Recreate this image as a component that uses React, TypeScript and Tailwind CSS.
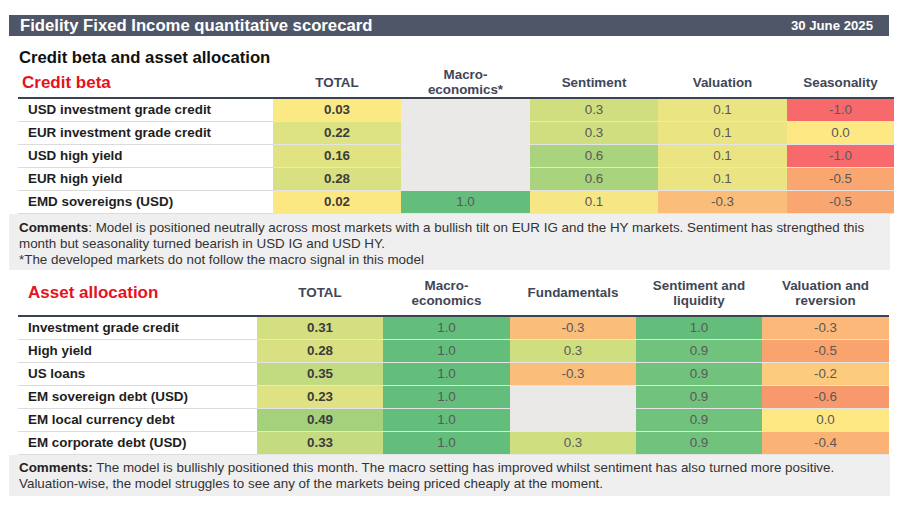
type Cell = { v: string; bg: string } | null;
type Row = { name: string; cells: Cell[] };

const creditCols = "grid-cols-[255px_128px_129px_128px_129px_107px]";
const assetCols = "grid-cols-[239px_126px_127px_126px_126px_127px]";

const creditRows: Row[] = [
  {
    name: "USD investment grade credit",
    cells: [
      { v: "0.03", bg: "bg-[#fbe983]" },
      null,
      { v: "0.3", bg: "bg-[#d0de80]" },
      { v: "0.1", bg: "bg-[#eae582]" },
      { v: "-1.0", bg: "bg-[#f8696b]" },
    ],
  },
  {
    name: "EUR investment grade credit",
    cells: [
      { v: "0.22", bg: "bg-[#dde282]" },
      null,
      { v: "0.3", bg: "bg-[#d0de80]" },
      { v: "0.1", bg: "bg-[#eae582]" },
      { v: "0.0", bg: "bg-[#fee883]" },
    ],
  },
  {
    name: "USD high yield",
    cells: [
      { v: "0.16", bg: "bg-[#e1e382]" },
      null,
      { v: "0.6", bg: "bg-[#a9d37d]" },
      { v: "0.1", bg: "bg-[#eae582]" },
      { v: "-1.0", bg: "bg-[#f8696b]" },
    ],
  },
  {
    name: "EUR high yield",
    cells: [
      { v: "0.28", bg: "bg-[#d9e081]" },
      null,
      { v: "0.6", bg: "bg-[#a9d37d]" },
      { v: "0.1", bg: "bg-[#eae582]" },
      { v: "-0.5", bg: "bg-[#f9a671]" },
    ],
  },
  {
    name: "EMD sovereigns (USD)",
    cells: [
      { v: "0.02", bg: "bg-[#fce883]" },
      { v: "1.0", bg: "bg-[#63be7b]" },
      { v: "0.1", bg: "bg-[#f7e784]" },
      { v: "-0.3", bg: "bg-[#fbbe7a]" },
      { v: "-0.5", bg: "bg-[#f9a671]" },
    ],
  },
];

const assetRows: Row[] = [
  {
    name: "Investment grade credit",
    cells: [
      { v: "0.31", bg: "bg-[#d3df81]" },
      { v: "1.0", bg: "bg-[#63be7b]" },
      { v: "-0.3", bg: "bg-[#fbbd7a]" },
      { v: "1.0", bg: "bg-[#63be7b]" },
      { v: "-0.3", bg: "bg-[#fbb879]" },
    ],
  },
  {
    name: "High yield",
    cells: [
      { v: "0.28", bg: "bg-[#d8e082]" },
      { v: "1.0", bg: "bg-[#63be7b]" },
      { v: "0.3", bg: "bg-[#cfdf80]" },
      { v: "0.9", bg: "bg-[#71c27c]" },
      { v: "-0.5", bg: "bg-[#f9a46f]" },
    ],
  },
  {
    name: "US loans",
    cells: [
      { v: "0.35", bg: "bg-[#c2da80]" },
      { v: "1.0", bg: "bg-[#63be7b]" },
      { v: "-0.3", bg: "bg-[#fbbd7a]" },
      { v: "0.9", bg: "bg-[#71c27c]" },
      { v: "-0.2", bg: "bg-[#fdcb7d]" },
    ],
  },
  {
    name: "EM sovereign debt (USD)",
    cells: [
      { v: "0.23", bg: "bg-[#dfe283]" },
      { v: "1.0", bg: "bg-[#63be7b]" },
      null,
      { v: "0.9", bg: "bg-[#71c27c]" },
      { v: "-0.6", bg: "bg-[#f8986d]" },
    ],
  },
  {
    name: "EM local currency debt",
    cells: [
      { v: "0.49", bg: "bg-[#a5d17c]" },
      { v: "1.0", bg: "bg-[#63be7b]" },
      null,
      { v: "0.9", bg: "bg-[#71c27c]" },
      { v: "0.0", bg: "bg-[#fee883]" },
    ],
  },
  {
    name: "EM corporate debt (USD)",
    cells: [
      { v: "0.33", bg: "bg-[#c5db80]" },
      { v: "1.0", bg: "bg-[#63be7b]" },
      { v: "0.3", bg: "bg-[#cfdf80]" },
      { v: "0.9", bg: "bg-[#71c27c]" },
      { v: "-0.4", bg: "bg-[#fab275]" },
    ],
  },
];

function TableRow({ row, cols }: { row: Row; cols: string }) {
  return (
    <div className={`grid ${cols}`}>
      <div className="h-[23px] border-b border-[#dcdcdc] pl-[10px] flex items-center font-bold text-[13.4px] text-[#1e1e1e]">
        {row.name}
      </div>
      {row.cells.map((c, i) =>
        c ? (
          <div
            key={i}
            className={`h-[23px] border-b border-[#e4e4e4] flex items-center justify-center text-[13.4px] ${c.bg} ${
              i === 0 ? "font-bold text-[#3c3c3c]" : "text-[#595959]"
            }`}
          >
            {c.v}
          </div>
        ) : (
          <div key={i} className="h-[23px] border-b border-[#ebe9e8] bg-[#ebe9e8]" />
        )
      )}
    </div>
  );
}

function Head({ children }: { children: React.ReactNode }) {
  return <div className="text-center font-bold text-[13.4px] leading-[15px] text-[#3f4756]">{children}</div>;
}

export default function App() {
  return (
    <div className="w-[900px] h-[510px] bg-white pt-[15px] font-['Liberation_Sans',Arial,sans-serif] overflow-hidden">
      {/* title bar */}
      <div className="ml-[9px] w-[880px] h-[21px] bg-[#4e5667] flex items-center justify-between pl-[11px] pr-[16px]">
        <span className="text-white font-bold text-[16.7px]">Fidelity Fixed Income quantitative scorecard</span>
        <span className="text-white font-bold text-[13.2px]">30 June 2025</span>
      </div>

      <div className="ml-[19px] mt-[13px] h-[18px] leading-[18px] text-[16.7px] font-bold text-[#111]">
        Credit beta and asset allocation
      </div>

      {/* credit beta */}
      <div className="ml-[18px] w-[876px]">
        <div className={`grid ${creditCols} h-[32px] items-center border-b-2 border-[#3b4353]`}>
          <div className="pl-[4px] pt-[1px] text-[17px] font-bold text-[#e5131d]">Credit beta</div>
          <Head>TOTAL</Head>
          <Head>
            Macro-
            <br />
            economics*
          </Head>
          <Head>Sentiment</Head>
          <Head>Valuation</Head>
          <Head>Seasonality</Head>
        </div>
        {creditRows.map((r) => (
          <TableRow key={r.name} row={r} cols={creditCols} />
        ))}
      </div>

      <div className="ml-[9px] w-[881px] h-[56px] bg-[#efefef] pl-[10px] pt-[6px] text-[13.4px] leading-[16px] text-[#333]">
        <span className="font-bold text-[#222]">Comments</span>: Model is positioned neutrally across most markets with a bullish tilt on EUR IG and the HY markets. Sentiment has strengthed this
        <br />
        month but seasonality turned bearish in USD IG and USD HY.
        <br />
        *The developed markets do not follow the macro signal in this model
      </div>

      {/* asset allocation */}
      <div className="ml-[18px] w-[871px]">
        <div className={`grid ${assetCols} h-[47px] items-center border-b-2 border-[#3b4353]`}>
          <div className="pl-[10px] pt-[1px] text-[17px] font-bold text-[#e5131d]">Asset allocation</div>
          <Head>TOTAL</Head>
          <Head>
            Macro-
            <br />
            economics
          </Head>
          <Head>Fundamentals</Head>
          <Head>
            Sentiment and
            <br />
            liquidity
          </Head>
          <Head>
            Valuation and
            <br />
            reversion
          </Head>
        </div>
        {assetRows.map((r) => (
          <TableRow key={r.name} row={r} cols={assetCols} />
        ))}
      </div>

      <div className="ml-[9px] w-[881px] h-[41px] bg-[#efefef] pl-[10px] pt-[5px] text-[13.4px] leading-[16px] text-[#333]">
        <span className="font-bold text-[#222]">Comments:</span> The model is bullishly positioned this month. The macro setting has improved whilst sentiment has also turned more positive.
        <br />
        Valuation-wise, the model struggles to see any of the markets being priced cheaply at the moment.
      </div>
    </div>
  );
}
